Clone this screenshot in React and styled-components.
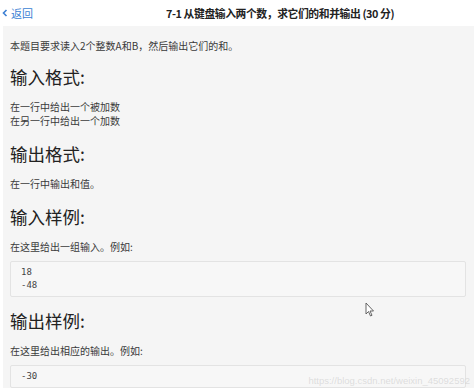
import React from "react"
import styled, { createGlobalStyle } from "styled-components"

const Global = createGlobalStyle`
  body {
    margin: 0;
    background: #fff;
    font-family: "Noto Sans CJK SC", "Noto Sans", sans-serif;
    color: #333;
  }
`

const Page = styled.div`
  position: relative;
  width: 474px;
  height: 391px;
  overflow: hidden;
`

const Header = styled.header`
  height: 26px;
  display: flex;
  align-items: center;
`

const Back = styled.a`
  display: flex;
  align-items: center;
  gap: 3px;
  padding-left: 2px;
  width: 164px;
  color: #3b7fd4;
  font-size: 11px;
  text-decoration: none;
`

const Title = styled.h1`
  margin: 0;
  font-size: 10.8px;
  letter-spacing: -0.4px;
  font-weight: bold;
  color: #222;
`

const Panel = styled.main`
  margin-left: 3px;
  background: #f5f5f5;
  padding: 13px 8px 0 7px;
  height: 362px;
  box-sizing: border-box;
`

const Text = styled.p`
  margin: 0;
  font-size: 10px;
  line-height: 14px;
  color: #3a3a3a;
`

const Code = styled.pre`
  margin: 7px 0 0;
  padding: 4px 10px;
  border: 1px solid #e3e3e3;
  border-radius: 2px;
  background: #f7f7f7;
  font-family: "DejaVu Sans Mono", monospace;
  font-size: 9px;
  line-height: 13px;
  color: #444;
`

const Heading = styled.h2`
  margin: ${p => (p.$lead ? "12px" : "14px")} 0 11px;
  font-size: 17.5px;
  font-weight: normal;
  line-height: 24px;
  color: #222;

  ${Code} + & {
    margin-top: 12px;
  }
`

const Watermark = styled.span`
  position: absolute;
  right: 4px;
  bottom: 5px;
  font-family: "Liberation Sans", sans-serif;
  font-size: 9.5px;
  color: rgba(200, 200, 200, 0.55);
`

const Cursor = styled.svg`
  position: absolute;
  left: 365px;
  top: 302px;
`

export default function App() {
  return (
    <Page>
      <Global />
      <Header>
        <Back href="#">
          <svg width="6" height="8" viewBox="0 0 6 8">
            <path d="M4.5 1 L1.5 4 L4.5 7" fill="none" stroke="#3b7fd4" strokeWidth="1.6" />
          </svg>
          返回
        </Back>
        <Title>7-1 从键盘输入两个数，求它们的和并输出 (30 分)</Title>
      </Header>
      <Panel>
        <Text>本题目要求读入2个整数A和B，然后输出它们的和。</Text>
        <Heading $lead>输入格式:</Heading>
        <Text>在一行中给出一个被加数</Text>
        <Text>在另一行中给出一个加数</Text>
        <Heading>输出格式:</Heading>
        <Text>在一行中输出和值。</Text>
        <Heading>输入样例:</Heading>
        <Text>在这里给出一组输入。例如:</Text>
        <Code>{"18\n-48"}</Code>
        <Heading>输出样例:</Heading>
        <Text>在这里给出相应的输出。例如:</Text>
        <Code>-30</Code>
      </Panel>
      <Watermark>https://blog.csdn.net/weixin_45092592</Watermark>
      <Cursor width="10" height="15" viewBox="0 0 10 15">
        <path d="M1 1 L1 12 L3.5 9.5 L5.5 14 L7 13.3 L5 9 L8.5 9 Z" fill="#fff" stroke="#555" strokeWidth="0.9" />
      </Cursor>
    </Page>
  )
}
